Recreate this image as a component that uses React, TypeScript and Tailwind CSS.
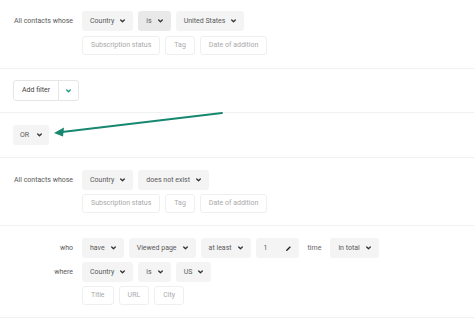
import React from 'react';

const Chevron = ({ className = 'text-[#333]' }: { className?: string }) => (
  <svg width="5" height="4" viewBox="0 0 5 4" className={className}>
    <path d="M0.7 1 L2.5 2.8 L4.3 1" fill="none" stroke="currentColor" strokeWidth="1.3" strokeLinecap="round" strokeLinejoin="round" />
  </svg>
);

const Select = ({ label, dark }: { label: string; dark?: boolean }) => (
  <div
    className={`h-[20px] flex items-center gap-[6px] pl-[8px] pr-[8px] rounded-[3px] text-[#5a5a5a] ${
      dark ? 'bg-[#e9e9e9]' : 'bg-[#f4f4f4]'
    }`}
  >
    <span>{label}</span>
    <Chevron />
  </div>
);

const Outline = ({ label }: { label: string }) => (
  <div className="h-[19px] flex items-center px-[8px] rounded-[3px] border border-[#efefef] text-[#aaa]">
    {label}
  </div>
);

const Row = ({ label, right, children }: { label?: string; right?: boolean; children: React.ReactNode }) => (
  <div className="flex items-center">
    <div className={`w-[82px] shrink-0 text-[#5a5a5a] ${right ? 'text-right pr-[9px]' : 'pl-[14px]'}`}>{label}</div>
    <div className="flex items-center gap-[5px]">{children}</div>
  </div>
);

export default function App() {
  return (
    <div
      className="relative w-[474px] h-[324px] bg-white text-[7px] leading-none overflow-hidden"
      style={{ fontFamily: 'Roboto, "Liberation Sans", sans-serif' }}
    >
      {/* first condition */}
      <div className="pt-[11px] pb-[13px] flex flex-col gap-[5px] border-b border-[#f1f1f1]">
        <Row label="All contacts whose">
          <Select label="Country" />
          <Select label="is" dark />
          <Select label="United States" />
        </Row>
        <Row>
          <Outline label="Subscription status" />
          <Outline label="Tag" />
          <Outline label="Date of addition" />
        </Row>
      </div>

      {/* add filter */}
      <div className="pt-[11px] pb-[11px] px-[13px] border-b border-[#f1f1f1]">
        <div className="inline-flex h-[21px] items-stretch rounded-[3px] border border-[#e6e6e6] text-[#444]">
          <div className="flex items-center px-[8px] border-r border-[#e6e6e6]">Add filter</div>
          <div className="flex items-center justify-center w-[19px]">
            <Chevron className="text-[#1b957a]" />
          </div>
        </div>
      </div>

      {/* OR */}
      <div className="pt-[12px] pb-[12px] px-[13px] border-b border-[#f1f1f1]">
        <div className="inline-flex h-[20px] items-center gap-[8px] px-[7px] rounded-[3px] bg-[#f4f4f4] text-[#5a5a5a]">
          <span>OR</span>
          <Chevron />
        </div>
      </div>

      {/* second condition */}
      <div className="pt-[12px] pb-[12px] flex flex-col gap-[4px] border-b border-[#f1f1f1]">
        <Row label="All contacts whose">
          <Select label="Country" />
          <Select label="does not exist" />
        </Row>
        <Row>
          <Outline label="Subscription status" />
          <Outline label="Tag" />
          <Outline label="Date of addition" />
        </Row>
      </div>

      {/* activity condition */}
      <div className="pt-[12px] pb-[12px] flex flex-col gap-[4px] border-b border-[#f1f1f1]">
        <Row label="who" right>
          <Select label="have" />
          <Select label="Viewed page" />
          <Select label="at least" />
          <div className="h-[20px] w-[43px] flex items-center justify-between pl-[8px] pr-[7px] rounded-[3px] bg-[#f4f4f4] text-[#5a5a5a]">
            <span>1</span>
            <svg width="7" height="7" viewBox="0 0 7 7">
              <path d="M1 6 L1.3 4.7 L4.8 1.2 L5.8 2.2 L2.3 5.7 Z" fill="#222" />
            </svg>
          </div>
          <span className="text-[#666] px-[4px]">time</span>
          <Select label="in total" />
        </Row>
        <Row label="where" right>
          <Select label="Country" />
          <Select label="is" />
          <Select label="US" />
        </Row>
        <Row>
          <Outline label="Title" />
          <Outline label="URL" />
          <Outline label="City" />
        </Row>
      </div>

      {/* annotation arrow */}
      <svg className="absolute left-0 top-0 pointer-events-none" width="474" height="324">
        <line x1="222" y1="113" x2="62" y2="132" stroke="#17876f" strokeWidth="1.8" strokeLinecap="round" />
        <path d="M54 133 L64 127.5 L63 136.5 Z" fill="#17876f" />
      </svg>
    </div>
  );
}
